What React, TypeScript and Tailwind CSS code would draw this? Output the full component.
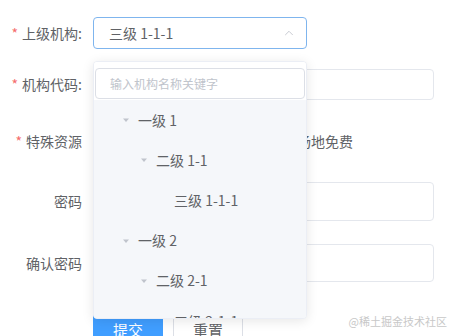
import { ChevronUp } from "lucide-react";

const font = { fontFamily: '"Noto Sans CJK SC", "Noto Sans", sans-serif' };

const Label = ({ text, required }: { text: string; required?: boolean }) => (
	<div className="w-[93px] shrink-0 pr-[11px] flex justify-end items-center text-[14px] text-[#606266]">
		{required && <span className="text-[#f56c6c] mr-[4px]">*</span>}
		{text}
	</div>
);

const tree = [
	{ label: "一级 1", level: 0, arrow: true },
	{ label: "二级 1-1", level: 1, arrow: true },
	{ label: "三级 1-1-1", level: 2, arrow: false },
	{ label: "一级 2", level: 0, arrow: true },
	{ label: "二级 2-1", level: 1, arrow: true },
	{ label: "三级 2-1-1", level: 2, arrow: false },
];

const Caret = () => (
	<svg width="8" height="6" viewBox="0 0 8 6" className="shrink-0">
		<path d="M1 1.5 L7 1.5 L4 5 Z" fill="#c0c4cc" />
	</svg>
);

export default function App() {
	return (
		<div className="relative w-[457px] h-[336px] overflow-hidden bg-white" style={font}>
			<div className="flex flex-col pt-[17px]">
				{/* 上级机构 */}
				<div className="flex h-[32px]">
					<Label text="上级机构:" required />
					<div className="w-[214px] h-[32px] border border-[#7fb5ee] rounded-[4px] flex items-center justify-between pl-[15px] pr-[10px] text-[14px] text-[#606266]">
						<span>三级 1-1-1</span>
						<ChevronUp className="w-[14px] h-[14px] text-[#c0c4cc]" strokeWidth={1.5} />
					</div>
				</div>

				{/* 机构代码 */}
				<div className="flex h-[31px] mt-[20px]">
					<Label text="机构代码:" required />
					<div className="w-[341px] h-[31px] border border-[#e4e7ed] rounded-[4px]" />
				</div>

				{/* 特殊资源 */}
				<div className="flex h-[30px] mt-[26px] items-center">
					<Label text="特殊资源" required />
					<div className="flex items-center text-[14px] text-[#606266]">
						<div className="w-[204px] flex items-center gap-[8px]">
							<span className="w-[14px] h-[14px] rounded-full border border-[#dcdfe6]" />
							<span>场地收费</span>
						</div>
						<span>场地免费</span>
					</div>
				</div>

				{/* 密码 */}
				<div className="flex h-[39px] mt-[26px]">
					<Label text="密码" />
					<div className="w-[341px] h-[39px] border border-[#e4e7ed] rounded-[4px]" />
				</div>

				{/* 确认密码 */}
				<div className="flex h-[38px] mt-[23px]">
					<Label text="确认密码" />
					<div className="w-[341px] h-[38px] border border-[#e4e7ed] rounded-[4px]" />
				</div>

				{/* 按钮 */}
				<div className="flex h-[36px] mt-[30px]">
					<div className="w-[93px] shrink-0" />
					<button className="w-[70px] h-[36px] bg-[#409eff] rounded-[4px] text-white text-[15px] flex items-center justify-center">
						提交
					</button>
					<button className="w-[70px] h-[36px] ml-[10px] bg-white border border-[#dcdfe6] rounded-[4px] text-[#606266] text-[15px] flex items-center justify-center">
						重置
					</button>
				</div>
			</div>

			{/* 下拉面板 */}
			<div className="absolute left-[93px] top-[61px] w-[214px] h-[258px] bg-white border border-[#ebeef5] rounded-[4px] shadow-[0_2px_12px_rgba(0,0,0,0.1)] overflow-hidden flex flex-col">
				<div className="px-[1px] pt-[6px] pb-[1px] bg-white">
					<div className="h-[31px] border border-[#dcdfe6] rounded-[4px] flex items-center pl-[14px] text-[12px] text-[#c0c4cc]">
						输入机构名称关键字
					</div>
				</div>
				<div className="flex-1 bg-[#f5f7fa] flex flex-col">
					{tree.map((node, i) => (
						<div
							key={i}
							className={`h-[40.2px] shrink-0 flex items-center text-[14px] text-[#606266] ${
								node.level === 0 ? "pl-[28px]" : node.level === 1 ? "pl-[46px]" : "pl-[80px]"
							}`}>
							{node.arrow && (
								<span className="mr-[8px] flex items-center">
									<Caret />
								</span>
							)}
							<span>{node.label}</span>
						</div>
					))}
				</div>
			</div>

			{/* 水印 */}
			<div className="absolute right-[10px] top-[313px] text-[11px] text-[#c8c8c8]">@稀土掘金技术社区</div>
		</div>
	);
}
